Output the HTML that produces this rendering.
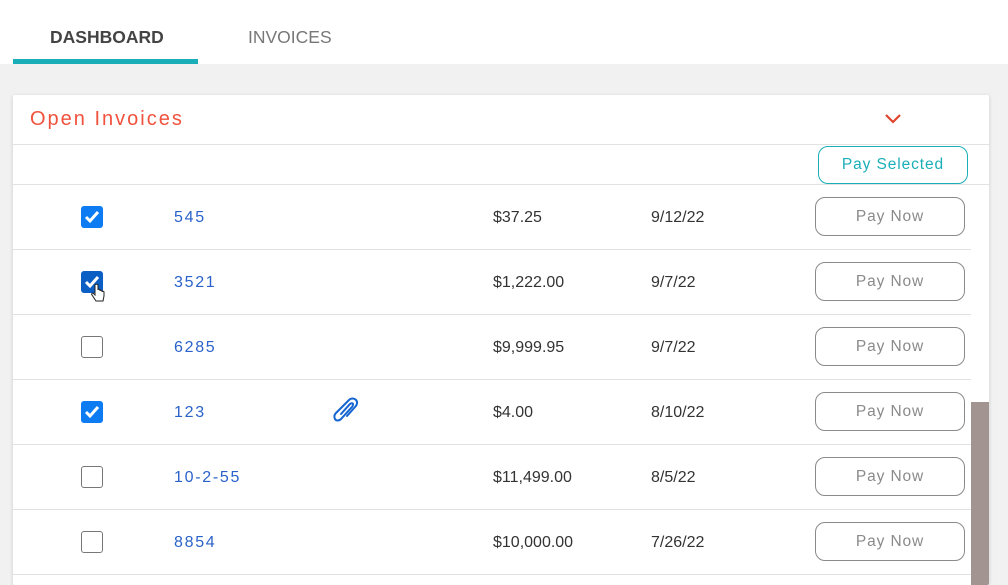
<!DOCTYPE html>
<html><head><style>
*{margin:0;padding:0;box-sizing:border-box}
body{width:1008px;height:575px;overflow:hidden;background:#f1f1f1;font-family:"Liberation Sans",sans-serif;position:relative}
.top{position:absolute;left:0;top:0;width:1008px;height:64px;background:#fff}
.tab{position:absolute;top:27px;font-size:17.5px;line-height:20px}
.card{position:absolute;left:13px;top:95px;width:976px;height:490px;background:#fff;box-shadow:0 1px 4px rgba(0,0,0,.15);border-radius:2px;overflow:hidden}
.a{position:absolute}
.line{position:absolute;left:0;height:1px;background:#e2e2e2}
.btn{position:absolute;width:150px;height:39px;border:1px solid #8a8a8a;border-radius:10px;font-size:15.5px;color:#8a8a8a;text-align:center;line-height:38px;letter-spacing:.9px}
.cb{position:absolute;left:68px;width:22px;height:22px;border-radius:3px}
.on{background:#0d7cf2}
.off{border:1.5px solid #777;background:#fff}
.num{position:absolute;left:161px;font-size:16px;color:#2a62c9;letter-spacing:1.7px}
.amt{position:absolute;left:480px;font-size:16px;color:#333}
.dt{position:absolute;left:638px;font-size:16px;color:#333}
</style></head><body>
<div class="top">
<div class="tab" style="left:50px;font-weight:bold;color:#444">DASHBOARD</div>
<div class="tab" style="left:248px;color:#777">INVOICES</div>
<div class="a" style="left:13px;top:59px;width:185px;height:5px;background:#1aafb8"></div>
</div>
<div class="card">
<div class="a" style="left:17px;top:13px;font-size:20px;color:#f0523d;letter-spacing:2px">Open Invoices</div>
<svg class="a" style="left:871px;top:18px" width="18" height="12" viewBox="0 0 18 12"><path d="M2 2l7 7 7-7" fill="none" stroke="#e0442c" stroke-width="2.2"/></svg>
<div class="line" style="top:49px;width:976px"></div>
<div class="btn" style="left:805px;top:51px;border-color:#1aafb8;color:#1aafb8;width:150px;height:38px;line-height:36px">Pay Selected</div>
<div class="line" style="top:89px;width:976px"></div>

<div class="cb on" style="top:111px"><svg width="22" height="22"><path d="M5 11l4 4 8-9" fill="none" stroke="#fff" stroke-width="3"/></svg></div>
<div class="num" style="top:114px">545</div><div class="amt" style="top:114px">$37.25</div><div class="dt" style="top:114px">9/12/22</div>
<div class="btn" style="left:802px;top:102px">Pay Now</div>
<div class="line" style="top:154px;width:958px"></div>

<div class="cb on" style="top:176px;background:#0b5fc4"><svg width="22" height="22"><path d="M5 11l4 4 8-9" fill="none" stroke="#fff" stroke-width="3"/></svg></div>
<svg class="a" style="left:77px;top:188px" width="16" height="20" viewBox="0 0 16 20"><path d="M5 2v10l-2-2c-1 0-2 1-1 2l4 6h7l1-5v-4c0-1-2-1-2 0v-1c0-1-2-1-2 0v-1c0-1-2-1-2 0V2c0-1-3-1-3 0z" fill="#fff" stroke="#222" stroke-width="1"/></svg>
<div class="num" style="top:179px">3521</div><div class="amt" style="top:179px">$1,222.00</div><div class="dt" style="top:179px">9/7/22</div>
<div class="btn" style="left:802px;top:167px">Pay Now</div>
<div class="line" style="top:219px;width:958px"></div>

<div class="cb off" style="top:241px"></div>
<div class="num" style="top:244px">6285</div><div class="amt" style="top:244px">$9,999.95</div><div class="dt" style="top:244px">9/7/22</div>
<div class="btn" style="left:802px;top:232px">Pay Now</div>
<div class="line" style="top:284px;width:958px"></div>

<div class="cb on" style="top:306px"><svg width="22" height="22"><path d="M5 11l4 4 8-9" fill="none" stroke="#fff" stroke-width="3"/></svg></div>
<div class="num" style="top:309px">123</div>
<svg class="a" style="left:319px;top:302px" width="28" height="26" viewBox="0 0 28 26"><path d="M9 17l9-10c1-1 3-1 3 0s0 2-1 3L9 22c-2 2-5 2-6 0s-1-4 1-6L17 3c2-2 5-2 7 0s1 5-1 7L15 19" fill="none" stroke="#1565d0" stroke-width="2" stroke-linecap="round"/></svg>
<div class="amt" style="top:309px">$4.00</div><div class="dt" style="top:309px">8/10/22</div>
<div class="btn" style="left:802px;top:297px">Pay Now</div>
<div class="line" style="top:349px;width:958px"></div>

<div class="cb off" style="top:371px"></div>
<div class="num" style="top:374px">10-2-55</div><div class="amt" style="top:374px">$11,499.00</div><div class="dt" style="top:374px">8/5/22</div>
<div class="btn" style="left:802px;top:362px">Pay Now</div>
<div class="line" style="top:414px;width:958px"></div>

<div class="cb off" style="top:436px"></div>
<div class="num" style="top:439px">8854</div><div class="amt" style="top:439px">$10,000.00</div><div class="dt" style="top:439px">7/26/22</div>
<div class="btn" style="left:802px;top:427px">Pay Now</div>
<div class="line" style="top:479px;width:958px"></div>

<div class="a" style="left:958px;top:307px;width:18px;height:200px;background:#a29591"></div>
</div>
</body></html>
